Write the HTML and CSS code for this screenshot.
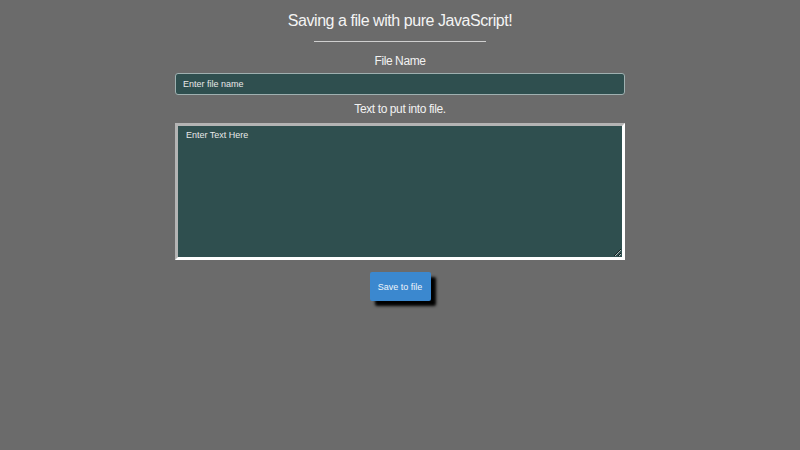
FILE: index.html
```html
<!DOCTYPE html>
<html lang="en">
<head>
<meta charset="utf-8">
<title>Saving a file with pure JavaScript!</title>
<link rel="stylesheet" href="styles.css">
</head>
<body>
<main class="page">
  <h1 class="title">Saving a file with pure JavaScript!</h1>
  <div class="rule"></div>
  <label class="label label-name" for="fname">File Name</label>
  <input class="field" id="fname" type="text" placeholder="Enter file name">
  <label class="label label-text" for="ftext">Text to put into file.</label>
  <textarea class="area" id="ftext" placeholder="Enter Text Here"></textarea>
  <button class="save" type="button">Save to file</button>
</main>
</body>
</html>
```

FILE: styles.css
```css
html, body {
  margin: 0;
  padding: 0;
  background: #6b6b6b;
}
body {
  font-family: "Liberation Sans", Arial, sans-serif;
  color: #f2f2f2;
}
.page {
  width: 450px;
  margin: 0 auto;
  padding-top: 12px;
  padding-bottom: 20px;
  display: flex;
  flex-direction: column;
  align-items: center;
}
.title {
  margin: 0;
  font-size: 16px;
  line-height: 18px;
  letter-spacing: -0.45px;
  font-weight: normal;
  color: #f4f4f4;
}
.rule {
  width: 172px;
  height: 1px;
  background: #cfcfcf;
  margin-top: 11px;
}
.label {
  font-size: 12px;
  line-height: 14px;
  letter-spacing: -0.4px;
  color: #f2f2f2;
}
.label-name { margin-top: 12px; }
.label-text { margin-top: 7px; }
.field {
  margin-top: 5px;
  width: 450px;
  height: 22px;
  box-sizing: border-box;
  border: 1px solid #9fb0b0;
  border-radius: 3px;
  background: #2f4f4f;
  color: #e6e6e6;
  padding: 0 7px;
  font-family: "Liberation Sans", Arial, sans-serif;
  font-size: 9px;
  outline: none;
}
.field::placeholder, .area::placeholder {
  color: #e8e8e8;
  opacity: 1;
}
.area {
  margin-top: 7px;
  width: 450px;
  height: 137px;
  box-sizing: border-box;
  border-width: 3px;
  border-style: solid;
  border-color: #b4b4b4 #ffffff #ffffff #b4b4b4;
  background: #2f4f4f;
  color: #e6e6e6;
  padding: 4px 8px;
  font-family: "Liberation Sans", Arial, sans-serif;
  font-size: 9px;
  outline: none;
}
.save {
  margin-top: 12px;
  width: 61px;
  height: 29px;
  border: none;
  border-radius: 2px;
  background: #3b88cf;
  color: #eef4fa;
  font-family: "Liberation Sans", Arial, sans-serif;
  font-size: 9px;
  padding: 0;
  box-shadow: 5px 5px 3px 0 #000;
}
```
